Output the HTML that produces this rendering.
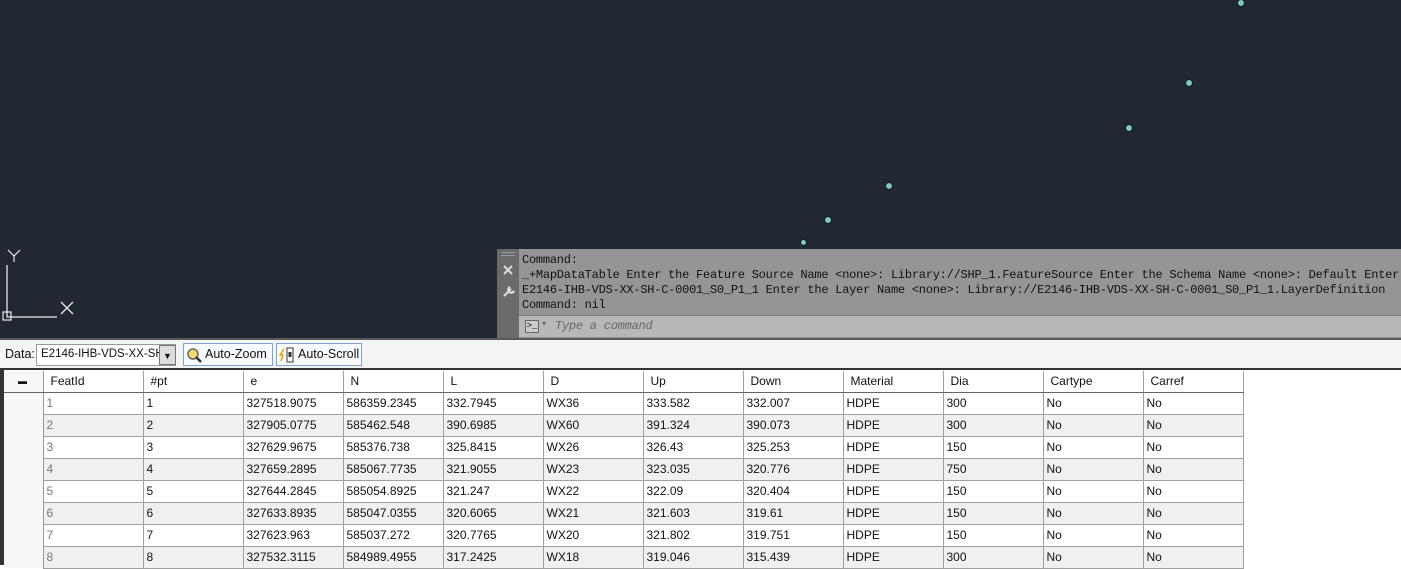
<!DOCTYPE html>
<html><head><meta charset="utf-8"><style>
*{margin:0;padding:0;box-sizing:border-box}
body{width:1401px;height:565px;overflow:hidden;background:#fff;position:relative;font-family:"Liberation Sans",sans-serif}
#cv{position:absolute;left:0;top:0;width:1401px;height:338px;background:#222831}
.dot{position:absolute;width:8px;height:8px;border-radius:50%;background:#7fc7bf;border:1px solid #0d1a1a}
#cmd{position:absolute;left:497px;top:249px;width:904px;height:89px;background:#959595}
#side{position:absolute;left:0;top:0;width:22px;height:89px;background:#6b6b6b}
#txt{position:absolute;left:25px;top:4px;font:12px/15px "Liberation Mono",monospace;letter-spacing:-0.24px;color:#111;white-space:pre}
#inp{position:absolute;left:22px;top:66px;right:0;height:22px;background:#b8b8b8;border-top:1px solid #7a7a7a}
#tb{position:absolute;left:0;top:338px;width:1401px;height:31px;background:#f4f4f4;border-top:2px solid #5a5a5a;font-size:12.5px;color:#111}
.btn{position:absolute;top:3px;height:23px;border:1px solid #79a6d6;background:#f8fbfe;line-height:21px;padding-left:21px}
table{position:absolute;left:4px;top:371px;border-collapse:collapse;font-size:12px;color:#111;table-layout:fixed}
td{height:22px;border:1px solid #a0a0a0;padding:0 3px;white-space:nowrap;overflow:hidden;vertical-align:middle}
tr.h td{background:#fff;border-top:none;border-bottom:1px solid #666;height:21px;padding-left:7px}
tr:nth-child(odd):not(.h) td{background:#f0f0f0}
td.rh{background:#f7f7f7!important;border:none;border-right:1px solid #999}
td.f{color:#777}
#lb{position:absolute;left:0;top:369px;width:4px;height:196px;background:#333}
#tl{position:absolute;left:0;top:368px;width:1401px;height:2px;background:#333}
</style></head><body>
<div id="cv">
<div class="dot" style="left:1237px;top:-1px"></div>
<div class="dot" style="left:1185px;top:79px"></div>
<div class="dot" style="left:1125px;top:124px"></div>
<div class="dot" style="left:885px;top:182px"></div>
<div class="dot" style="left:824px;top:216px"></div>
<div class="dot" style="left:800px;top:239px;width:7px;height:7px"></div>
<svg style="position:absolute;left:0;top:245px" width="80" height="80">
<path d="M7 20V72H57" stroke="#e8e8e8" stroke-width="1.3" fill="none"/>
<rect x="3" y="67" width="8" height="8" stroke="#e8e8e8" fill="none" stroke-width="1.2"/>
<path d="M8 5L14 11L20 5M14 11V17" stroke="#e8e8e8" stroke-width="1.2" fill="none"/>
<path d="M61 57L73 69M73 57L61 69" stroke="#e8e8e8" stroke-width="1.3" fill="none"/>
</svg>
</div>
<div id="cmd">
<div id="side">
<svg width="22" height="89"><g fill="#9a9a9a"><rect x="4" y="3" width="14" height="1"/><rect x="4" y="6" width="14" height="1"/></g>
<path d="M7 17L15 25M15 17L7 25" stroke="#ddd" stroke-width="2"/>
<path d="M7 47L14 40M13 38a3 3 0 1 0 4 4" stroke="#ddd" stroke-width="2.2" fill="none"/></svg>
</div>
<div id="txt">Command:
_+MapDataTable Enter the Feature Source Name &lt;none&gt;: Library://SHP_1.FeatureSource Enter the Schema Name &lt;none&gt;: Default Enter
E2146-IHB-VDS-XX-SH-C-0001_S0_P1_1 Enter the Layer Name &lt;none&gt;: Library://E2146-IHB-VDS-XX-SH-C-0001_S0_P1_1.LayerDefinition
Command: nil</div>
<div id="inp"><div style="position:absolute;left:6px;top:4px;width:14px;height:13px;border:1px solid #666;background:#ccc;font:9px monospace;line-height:11px;text-align:center">&gt;_</div><span style="position:absolute;left:23px;top:3px;font-size:8px;color:#666">▾</span><span style="position:absolute;left:36px;top:3px;font:italic 12px 'Liberation Mono',monospace;letter-spacing:-0.24px;color:#666">Type a command</span></div>
</div>
<div id="tb">
<span style="position:absolute;left:5px;top:7px">Data:</span>
<div style="position:absolute;left:36px;top:4px;width:140px;height:22px;border:1px solid #999;background:#fff;overflow:hidden;font-size:11.5px;padding:2px 4px;line-height:14px;white-space:nowrap">E2146-IHB-VDS-XX-SH-C</div>
<div style="position:absolute;left:159px;top:5px;width:17px;height:20px;border:1px solid #777;background:#ddd;text-align:center;font-size:9px;line-height:20px">▼</div>
<div class="btn" style="left:183px;width:90px">Auto-Zoom<svg style="position:absolute;left:2px;top:3px" width="16" height="16"><circle cx="7" cy="7" r="5" fill="#f5d76e" stroke="#666" stroke-width="1.5"/><path d="M10 10L15 15" stroke="#333" stroke-width="2.5"/></svg></div>
<div class="btn" style="left:276px;width:86px">Auto-Scroll<svg style="position:absolute;left:2px;top:3px" width="16" height="16"><path d="M5 2L1 8H4L2 14" stroke="#e8a000" stroke-width="1.5" fill="none"/><rect x="8" y="1" width="6" height="14" fill="#fff" stroke="#333"/><rect x="9.5" y="5" width="3" height="5" fill="#333"/></svg></div>
</div>
<div id="tl"></div>
<table>
<colgroup><col style="width:39px"><col style="width:100px" span="12"></colgroup>
<tr class="h"><td class="rh" style="border-bottom:1px solid #666;font-size:9px;padding-left:14px">▬</td><td>FeatId</td><td>#pt</td><td>e</td><td>N</td><td>L</td><td>D</td><td>Up</td><td>Down</td><td>Material</td><td>Dia</td><td>Cartype</td><td>Carref</td></tr>
<tr><td class="rh"></td><td class="f">1</td><td>1</td><td>327518.9075</td><td>586359.2345</td><td>332.7945</td><td>WX36</td><td>333.582</td><td>332.007</td><td>HDPE</td><td>300</td><td>No</td><td>No</td></tr>
<tr><td class="rh"></td><td class="f">2</td><td>2</td><td>327905.0775</td><td>585462.548</td><td>390.6985</td><td>WX60</td><td>391.324</td><td>390.073</td><td>HDPE</td><td>300</td><td>No</td><td>No</td></tr>
<tr><td class="rh"></td><td class="f">3</td><td>3</td><td>327629.9675</td><td>585376.738</td><td>325.8415</td><td>WX26</td><td>326.43</td><td>325.253</td><td>HDPE</td><td>150</td><td>No</td><td>No</td></tr>
<tr><td class="rh"></td><td class="f">4</td><td>4</td><td>327659.2895</td><td>585067.7735</td><td>321.9055</td><td>WX23</td><td>323.035</td><td>320.776</td><td>HDPE</td><td>750</td><td>No</td><td>No</td></tr>
<tr><td class="rh"></td><td class="f">5</td><td>5</td><td>327644.2845</td><td>585054.8925</td><td>321.247</td><td>WX22</td><td>322.09</td><td>320.404</td><td>HDPE</td><td>150</td><td>No</td><td>No</td></tr>
<tr><td class="rh"></td><td class="f">6</td><td>6</td><td>327633.8935</td><td>585047.0355</td><td>320.6065</td><td>WX21</td><td>321.603</td><td>319.61</td><td>HDPE</td><td>150</td><td>No</td><td>No</td></tr>
<tr><td class="rh"></td><td class="f">7</td><td>7</td><td>327623.963</td><td>585037.272</td><td>320.7765</td><td>WX20</td><td>321.802</td><td>319.751</td><td>HDPE</td><td>150</td><td>No</td><td>No</td></tr>
<tr><td class="rh"></td><td class="f">8</td><td>8</td><td>327532.3115</td><td>584989.4955</td><td>317.2425</td><td>WX18</td><td>319.046</td><td>315.439</td><td>HDPE</td><td>300</td><td>No</td><td>No</td></tr>
</table>
<div id="lb"></div>
</body></html>
